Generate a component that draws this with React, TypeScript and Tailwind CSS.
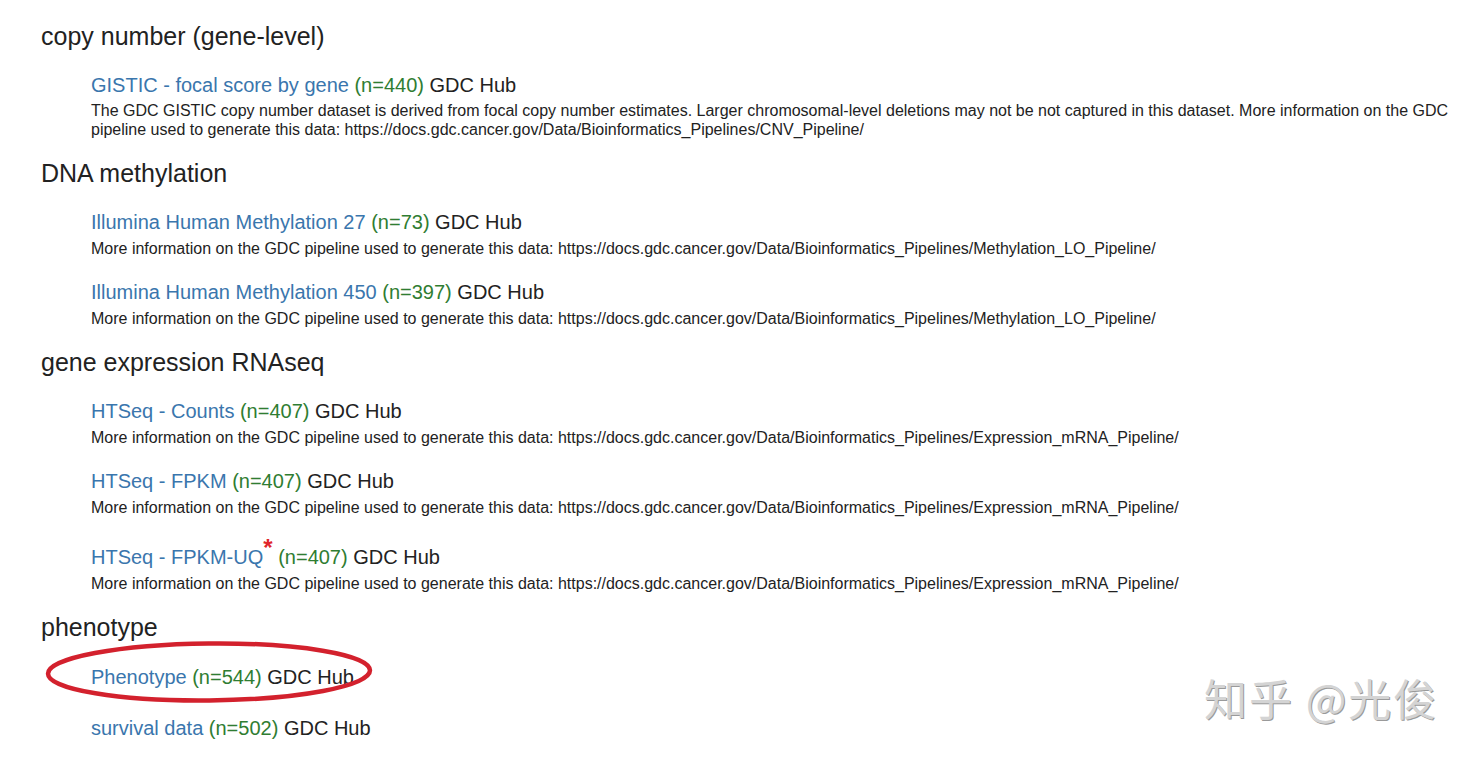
import React from 'react'

type Item = { name: string; n: number; desc?: string; star?: boolean; circled?: boolean; gap?: string; descGap?: string }
type Section = { title: string; items: Item[] }

const MORE = 'More information on the GDC pipeline used to generate this data: https://docs.gdc.cancer.gov/Data/Bioinformatics_Pipelines/'

const SECTIONS: Section[] = [
  {
    title: 'copy number (gene-level)',
    items: [
      {
        name: 'GISTIC - focal score by gene',
        n: 440,
        descGap: 'mt-[4px]',
        desc: 'The GDC GISTIC copy number dataset is derived from focal copy number estimates. Larger chromosomal-level deletions may not be not captured in this dataset. More information on the GDC pipeline used to generate this data: https://docs.gdc.cancer.gov/Data/Bioinformatics_Pipelines/CNV_Pipeline/',
      },
    ],
  },
  {
    title: 'DNA methylation',
    items: [
      { name: 'Illumina Human Methylation 27', n: 73, desc: MORE + 'Methylation_LO_Pipeline/' },
      { name: 'Illumina Human Methylation 450', n: 397, desc: MORE + 'Methylation_LO_Pipeline/', gap: 'mt-[22px]' },
    ],
  },
  {
    title: 'gene expression RNAseq',
    items: [
      { name: 'HTSeq - Counts', n: 407, desc: MORE + 'Expression_mRNA_Pipeline/' },
      { name: 'HTSeq - FPKM', n: 407, desc: MORE + 'Expression_mRNA_Pipeline/', gap: 'mt-[22px]' },
      { name: 'HTSeq - FPKM-UQ', n: 407, desc: MORE + 'Expression_mRNA_Pipeline/', star: true, gap: 'mt-[28px]' },
    ],
  },
  {
    title: 'phenotype',
    items: [
      { name: 'Phenotype', n: 544, circled: true, gap: 'mt-[24px]' },
      { name: 'survival data', n: 502, gap: 'mt-[27px]' },
    ],
  },
]

export default function App() {
  return (
    <div className="relative w-[1474px] h-[760px] overflow-hidden bg-white pl-[41px] pt-[22px] text-[#222] font-['Liberation_Sans',Arial,sans-serif]">
      {SECTIONS.map((sec, si) => (
        <div key={sec.title} className={si === 0 ? '' : 'mt-[20px]'}>
          <h2 className="text-[25px] leading-[28px] text-[#222]">{sec.title}</h2>
          {sec.items.map((it) => (
            <div key={it.name} className={`pl-[50px] ${it.gap ?? 'mt-[23px]'}`}>
              <div className="relative text-[20px] leading-[24px] whitespace-nowrap">
                {it.circled && (
                  <svg className="absolute left-[-46px] top-[-24px] w-[328px] h-[62px] pointer-events-none" viewBox="0 0 328 62">
                    <ellipse cx="164" cy="31" rx="161" ry="28.5" fill="none" stroke="#d3212d" strokeWidth="4.5" transform="rotate(-0.6 164 31)" />
                  </svg>
                )}
                <span className="text-[#3a76ad]">{it.name}</span>
                {it.star && <span className="relative top-[-8px] text-[24px] leading-[0] font-bold text-[#e0262b]">*</span>}
                <span className="text-[#2f7d32]"> (n={it.n})</span>
                <span className="text-[#222]"> GDC Hub</span>
              </div>
              {it.desc && (
                <p className={`${it.descGap ?? 'mt-[5px]'} pr-[14px] text-[16px] leading-[19px] text-[#222]`}>{it.desc}</p>
              )}
            </div>
          ))}
        </div>
      ))}

      {/* watermark */}
      <div className="absolute left-[1204px] top-[673px] text-[43px] leading-[48px] tracking-[2px] text-[#d4d4d4] [text-shadow:1px_1px_0_#9a9a9a] font-['Noto_Sans_CJK_SC',sans-serif]">
        知乎 @光俊
      </div>
    </div>
  )
}
